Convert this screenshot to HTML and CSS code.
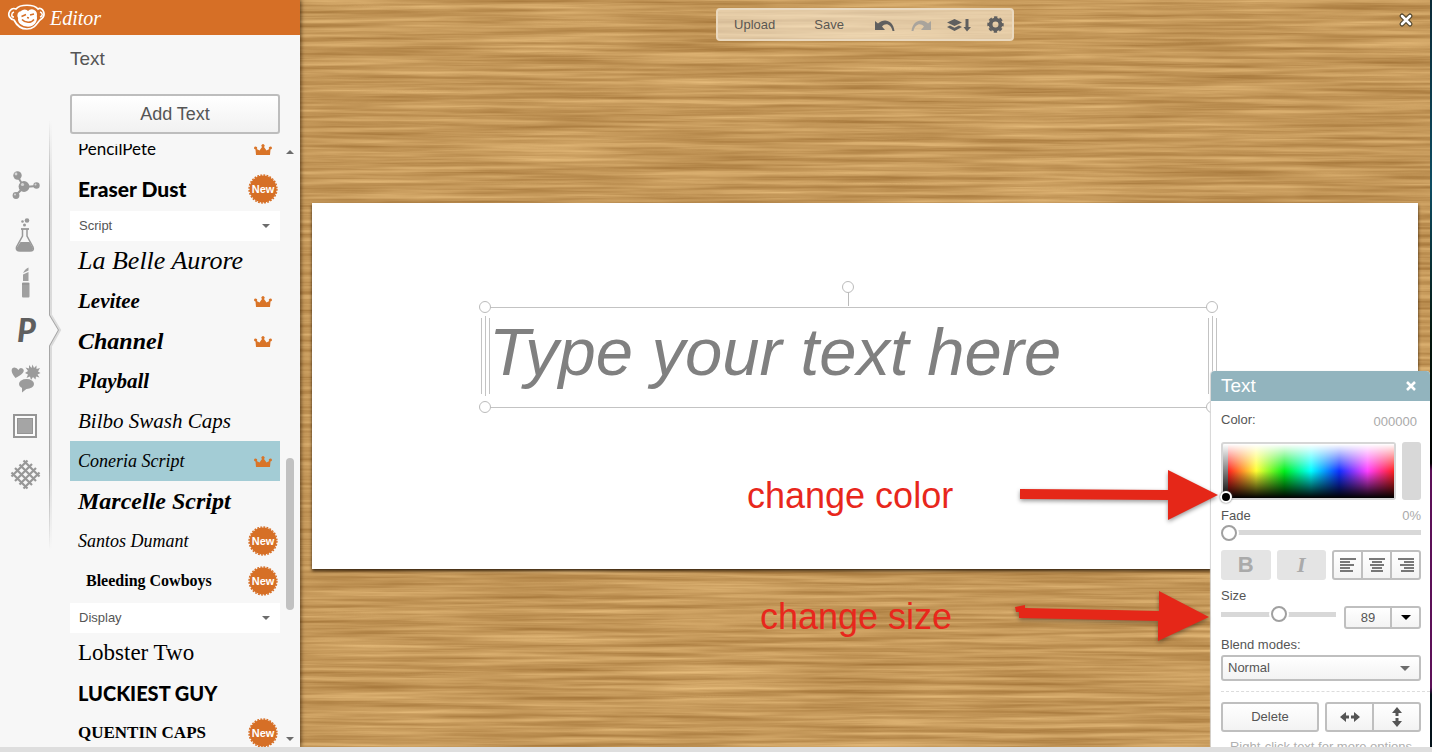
FILE: index.html
```html
<!DOCTYPE html>
<html lang="en">
<head>
<meta charset="utf-8">
<title>Editor</title>
<link rel="stylesheet" href="styles.css">
</head>
<body>
<svg class="defs" width="0" height="0" aria-hidden="true">
  <defs>
    <symbol id="crown" viewBox="0 0 18 11"><path d="M2 11 1.500 5.500A1.500 1.500 0 1 1 2.700 5L5.500 6.500 8 3A1.600 1.600 0 1 1 10 3L12.500 6.500 15.300 5A1.500 1.500 0 1 1 16.500 5.500L16 11Z" fill="#d97428"/></symbol>
    <symbol id="seal" viewBox="0 0 30 30"><circle cx="15" cy="15" r="13.500" fill="#d66f26"/><circle cx="15" cy="15" r="13.900" fill="none" stroke="#d66f26" stroke-width="1.500" stroke-dasharray="1.800 1.320"/></symbol>
    <filter id="grain" x="0" y="0" width="100%" height="100%" color-interpolation-filters="sRGB">
      <feTurbulence type="fractalNoise" baseFrequency="0.006 0.21" numOctaves="4" seed="11"/>
      <feColorMatrix values="0.3 0 0 0 0.62  0.32 0 0 0 0.435  0.3 0 0 0 0.2  0 0 0 0 1"/>
    </filter>
  </defs>
</svg>
<div class="app">
  <aside class="sidebar">
    <header class="brand">
      <svg width="40" height="30" viewBox="0 0 40 30" fill="none" stroke="#fff" stroke-width="1.700" aria-hidden="true">
        <path d="M11 6C15 1 29 1 33 6C37 3 43 12 35 17C32 20 30 26 22 26C15 26 11 21 9 17C0 15 4 3 11 6Z"/>
        <path d="M16 9C20 6 22 8 23 9C27 5 32 8 31 13C32 19 28 23 23 23C17 23 13 19 14 15C12 12 14 9 16 9Z" fill="#fff"/>
        <path d="M9 9C6 10 6 14 9 14M35 9C38 10 38 13 35 14" stroke-width="1.500"/>
        <path d="M16.500 13.500L21 11.500M25 12L29 11M17 16.500C20 20 26 20.500 29 16.500M22 14.500L24 15" stroke="#d66f26" stroke-width="1.500"/>
      </svg>
      <span class="brand-name">Editor</span>
    </header>
    <div class="side-body">
      <nav class="rail" aria-label="Tools">
        <svg class="rail-edge" width="14" height="430" viewBox="0 0 14 430" fill="none" aria-hidden="true">
          <defs><linearGradient id="edge" x1="0" y1="0" x2="0" y2="430" gradientUnits="userSpaceOnUse"><stop offset="0" stop-color="#999" stop-opacity="0"/><stop offset=".2" stop-color="#999"/><stop offset=".8" stop-color="#999"/><stop offset="1" stop-color="#999" stop-opacity="0"/></linearGradient></defs>
          <path d="M2.500 0V195L11.500 210 2.500 226V430" stroke="url(#edge)" stroke-width="3" opacity=".3"/>
          <path d="M1.500 0V195L10.500 210 1.500 226V430" stroke="url(#edge)" opacity=".8"/>
        </svg>
        <button class="tool" aria-label="Basic edits"><svg width="50" height="48" viewBox="0 0 50 48" fill="#989898"><path d="M17 13.500L24 25 16 33M24 25L37 24" stroke="#989898" stroke-width="2" fill="none"/><circle cx="17.500" cy="13.500" r="4.200"/><circle cx="24" cy="24.500" r="5.400"/><circle cx="36.500" cy="23.500" r="3.200"/><circle cx="16" cy="33.500" r="3.400"/><g fill="#d6d6d6"><circle cx="16" cy="12" r="1.400"/><circle cx="22.500" cy="22.500" r="1.600"/><circle cx="15" cy="32.500" r="1"/><circle cx="35.500" cy="22.500" r="1"/></g></svg></button>
        <button class="tool" aria-label="Effects"><svg width="50" height="48" viewBox="0 0 50 48" fill="#999"><circle cx="27" cy="10.500" r="2.300"/><circle cx="22.500" cy="11.500" r="1.300"/><circle cx="24.500" cy="15" r="1.500"/><path d="M21 19H29" stroke="#999" stroke-width="1.800"/><path d="M22.500 19V26L16.500 37Q15.500 41 20 41H30Q34.500 41 33 37L27 26V19" fill="none" stroke="#999" stroke-width="1.500"/><path d="M20.500 32H29.500L33 38Q33 41 30 41H20Q16 41 16.500 38Z"/></svg></button>
        <button class="tool" aria-label="Touch up"><svg width="50" height="48" viewBox="0 0 50 48" fill="#a0a0a0"><rect x="22" y="24.500" width="7.500" height="15" rx="1"/><path d="M23 16.500L28.500 14V23H23ZM23 15C25 11.500 26.500 10.500 28.500 9.500V12.500Z"/><path d="M22 26H29" stroke="#8d8d8d"/></svg></button>
        <button class="tool tool-text" aria-label="Text">P</button>
        <button class="tool" aria-label="Overlays"><svg width="50" height="48" viewBox="0 0 50 48" fill="#9b9b9b"><path d="M15.500 24C10 18 11 13.500 14.500 13.500Q17 13.500 18.500 16Q20 13 22.500 14.500C26 17 22 21 15.500 24Z"/><path d="M32.500 10.500L34 14 36.500 11.500 36.500 15 40 14 38 17.500 40.500 19 37.500 20.500 39.500 23.500 36 22.500 35.500 25.500 33 23 31 26 30 22.500 26.500 24 28 20.500 25 19 28 17 25.500 13.500 29 14.500 29 11 31.500 14Z"/><ellipse cx="26.500" cy="30" rx="7.500" ry="5"/><path d="M22 33V38.500L27 34.500Z"/></svg></button>
        <button class="tool" aria-label="Frames"><svg width="50" height="48" viewBox="0 0 50 48"><rect x="14" y="13" width="22" height="22" fill="#fcfcfc" stroke="#969696" stroke-width="2"/><rect x="17.500" y="16.500" width="15" height="15" fill="#a5a5a5" stroke="#949494"/></svg></button>
        <button class="tool" aria-label="Textures"><svg width="50" height="48" viewBox="0 0 50 48" stroke="#979797" stroke-width="2.200" fill="none"><path d="M11.500 22.500L27.500 38.500M15 18L32 35M19.500 14.500L36 31M23.500 10.500L39.500 26.500M11.500 26.500L27.500 10.500M15 31L32 14M19.500 34.500L36 18M23.500 38.500L39.500 22.500"/></svg></button>
      </nav>
      <section class="panel">
        <h1 class="panel-title">Text</h1>
        <button class="add-text">Add Text</button>
        <div class="browser">
          <div class="fonts">
            <button class="font clipped"><span class="hand">PencilPete</span><svg class="crown"><use href="#crown"/></svg></button>
            <button class="font"><span class="chalk">Eraser Dust</span><span class="new"><svg class="seal"><use href="#seal"/></svg><b>New</b></span></button>
            <button class="group">Script<i class="caret"></i></button>
            <button class="font"><span class="script s-xxl">La Belle Aurore</span></button>
            <button class="font"><span class="script s-l heavy">Levitee</span><svg class="crown"><use href="#crown"/></svg></button>
            <button class="font"><span class="script s-xl heavy">Channel</span><svg class="crown"><use href="#crown"/></svg></button>
            <button class="font"><span class="script s-l heavy">Playball</span></button>
            <button class="font"><span class="script s-l">Bilbo Swash Caps</span></button>
            <button class="font selected"><span class="script s-m">Coneria Script</span><svg class="crown"><use href="#crown"/></svg></button>
            <button class="font"><span class="script s-xl heavy">Marcelle Script</span></button>
            <button class="font"><span class="script s-m">Santos Dumant</span><span class="new"><svg class="seal"><use href="#seal"/></svg><b>New</b></span></button>
            <button class="font"><span class="western">Bleeding Cowboys</span><span class="new"><svg class="seal"><use href="#seal"/></svg><b>New</b></span></button>
            <button class="group">Display<i class="caret"></i></button>
            <button class="font"><span class="lobster">Lobster Two</span></button>
            <button class="font"><span class="luckiest">LUCKIEST GUY</span></button>
            <button class="font"><span class="quentin">QUENTIN CAPS</span><span class="new"><svg class="seal"><use href="#seal"/></svg><b>New</b></span></button>
          </div>
          <div class="scroll" aria-hidden="true"><i class="caret up"></i><span class="space-a"></span><span class="thumb"></span><span class="space-b"></span><i class="caret"></i></div>
        </div>
      </section>
    </div>
  </aside>

  <main class="workspace">
    <svg class="wood" width="100%" height="100%" aria-hidden="true"><rect width="100%" height="100%" filter="url(#grain)"/></svg>
    <div class="toolbar">
      <button class="word">Upload</button>
      <button class="word">Save</button>
      <div class="icons">
        <button aria-label="Undo"><svg width="20" height="14" viewBox="0 0 20 14"><path d="M0 3L3 5.500C9 0 18 2 19.500 13H17.500C16 6 10.500 4.500 7 8.500L10 12H0Z" fill="#5f5f5f"/></svg></button>
        <button aria-label="Redo"><svg width="20" height="14" viewBox="0 0 20 14"><path d="M20 3L17 5.500C11 0 2 2 .5 13H2.500C4 6 9.500 4.500 13 8.500L10 12H20Z" fill="#a9a49c"/></svg></button>
        <button aria-label="Flatten layers"><svg width="24" height="14" viewBox="0 0 24 14" fill="#5f5f5f"><path d="M7.500 1L15 4.500 7.500 8 0 4.500ZM0 9L3 7.500 7.500 9.800 12 7.500 15 9 7.500 13Z"/><path d="M18.500 1H21.500V9H24L20 13.500 16.500 9H18.500Z"/></svg></button>
        <button aria-label="Settings"><svg width="17" height="17" viewBox="0 0 17 17" fill="none" stroke="#5f5f5f"><circle cx="8.500" cy="8.500" r="4.900" stroke-width="3.800"/><circle cx="8.500" cy="8.500" r="7.200" stroke-width="2" stroke-dasharray="3.400 2.250" stroke-dashoffset="1.700"/></svg></button>
      </div>
    </div>
    <button class="close" aria-label="Close"><svg width="16" height="16" viewBox="0 0 16 16" stroke-linecap="round"><path d="M4 4L12 12M12 4L4 12" stroke="#54482f" stroke-width="5"/><path d="M4 4L12 12M12 4L4 12" stroke="#fff" stroke-width="2.500"/></svg></button>

    <div class="paper">
      <div class="textbox">
        <input class="canvas-text" aria-label="Canvas text" value="Type your text here">
        <svg class="side left" width="9" height="80" viewBox="0 0 9 80"><path d="M.5 2V78M4.500 0V80M8.500 2V78" stroke="#c3c3c3"/></svg>
        <svg class="side right" width="9" height="80" viewBox="0 0 9 80"><path d="M.5 2V78M4.500 0V80M8.500 2V78" stroke="#c3c3c3"/></svg>
        <i class="stem"></i>
        <i class="knob k1"></i><i class="knob k2"></i><i class="knob k3"></i><i class="knob k4"></i><i class="knob k5"></i>
      </div>
    </div>

    <p class="note note-color">change color</p>
    <p class="note note-size">change size</p>

    <section class="props">
      <header class="props-head"><h2>Text</h2><button aria-label="Close panel"><svg width="12" height="12" viewBox="0 0 12 12"><path d="M2 2L10 10M10 2L2 10" stroke="#fff" stroke-width="2.500"/></svg></button></header>
      <div class="props-body">
        <div class="line color-line"><label for="hex">Color:</label><input id="hex" value="000000"></div>
        <div class="picker-row"><div class="picker"><span class="hues"></span><i class="cursor"></i></div><span class="swatch"></span></div>
        <div class="line"><label for="fade">Fade</label><output class="pale" for="fade">0%</output></div>
        <input type="range" id="fade" min="0" max="100" value="0">
        <div class="style-row">
          <button class="flat">B</button><button class="flat ital">I</button>
          <div class="joined">
            <button aria-label="Align left"><svg width="16" height="16" viewBox="0 0 16 16"><path d="M0 2H16M0 5H10M0 8H14M0 11H10M0 14H13" stroke="#4e4e4e" stroke-width="1.600"/></svg></button>
            <button aria-label="Align center"><svg width="16" height="16" viewBox="0 0 16 16"><path d="M0 2H16M3 5H13M1 8H15M3 11H13M2 14H14" stroke="#4e4e4e" stroke-width="1.600"/></svg></button>
            <button aria-label="Align right"><svg width="16" height="16" viewBox="0 0 16 16"><path d="M0 2H16M6 5H16M2 8H16M6 11H16M3 14H16" stroke="#4e4e4e" stroke-width="1.600"/></svg></button>
          </div>
        </div>
        <div class="line"><label for="size">Size</label></div>
        <div class="size-row">
          <input type="range" id="size" min="0" max="178" value="89">
          <div class="joined spin"><input aria-label="Size value" value="89"><button aria-label="Size list"><i class="caret dark"></i></button></div>
        </div>
        <div class="line blend"><label for="blend">Blend modes:</label></div>
        <div class="select"><select id="blend"><option>Normal</option></select><i class="caret wide"></i></div>
        <hr>
        <div class="action-row">
          <button class="delete">Delete</button>
          <div class="joined flips">
            <button aria-label="Flip horizontally"><svg width="20" height="12" viewBox="0 0 20 12" fill="#555"><path d="M0 6L6 1V4.500H9V7.500H6V11ZM20 6L14 1V4.500H11V7.500H14V11Z"/></svg></button>
            <button aria-label="Flip vertically"><svg width="12" height="20" viewBox="0 0 12 20" fill="#555"><path d="M6 0L1 6H4.500V9H7.500V6H11ZM6 20L1 14H4.500V11H7.500V14H11Z"/></svg></button>
          </div>
        </div>
        <p class="hint">Right-click text for more options</p>
      </div>
    </section>

    <svg class="arrow arrow-color" width="200" height="54" viewBox="0 0 200 54" aria-hidden="true"><path d="M0 20L148 21V1L198 26 148 51V31L0 30Z" fill="#e52718"/></svg>
    <svg class="arrow arrow-size" width="200" height="54" viewBox="0 0 200 54" aria-hidden="true"><path d="M0 17L10 15V18L144 21V1L194 27 143 51V31L4 28V22L1 22Z" fill="#e52718"/></svg>
  </main>
  <div class="desktop-edge"></div>
</div>
<footer class="status"></footer>
</body>
</html>
```

FILE: styles.css
```css
* { box-sizing: border-box; }
body { margin: 0; height: 100vh; display: flex; flex-direction: column; overflow: hidden; font: 13px/18px "Liberation Sans", Arial, sans-serif; color: #555; }
button { font: inherit; color: inherit; border: 0; padding: 0; background: none; }
input, select { font: inherit; color: inherit; }
h1, h2, p { margin: 0; font-weight: normal; }
svg { display: block; flex: none; }
.defs { position: absolute; }
.app { flex: 1; min-height: 0; display: flex; }
.status { height: 5px; background: #dedede; position: relative; z-index: 5; }
.desktop-edge { width: 2px; background: linear-gradient(#0b2b38, #0e4d63 25%, #04170f 45%, #000 62%, #5c1058 63%, #5c1058 92%, #04121a 93%); }

.sidebar { width: 300px; flex: none; display: flex; flex-direction: column; background: #f7f7f7; position: relative; z-index: 2; box-shadow: 1px 0 4px rgba(40, 20, 0, .7); }
.brand { height: 35px; flex: none; background: #d66f26; display: flex; align-items: center; padding-left: 5px; gap: 5px; }
.brand-name { color: #fff; font: italic 20px/32px "Liberation Serif", serif; }
.side-body { flex: 1; min-height: 0; display: flex; }
.rail { width: 50px; padding-top: 127px; position: relative; display: flex; flex-direction: column; }
.rail-edge { position: absolute; left: 48px; top: 85px; }
.tool { height: 48px; width: 50px; }
.tool-text { font: italic 900 32px/48px Lato, sans-serif; color: #5f5f5f; padding-left: 3px; }
.panel { flex: 1; padding: 12px 5px 0 20px; display: flex; flex-direction: column; min-width: 0; }
.panel-title { font-size: 19px; line-height: 24px; }
.add-text { margin-top: 23px; width: 210px; height: 40px; flex: none; border: 2px solid #bdbdbd; border-radius: 3px; background: linear-gradient(#fff, #f1f1f1); font-size: 18px; }
.browser { margin-top: 10px; flex: 1; min-height: 0; display: flex; justify-content: space-between; }
.fonts { width: 210px; overflow: hidden; }
.font { width: 100%; height: 40px; display: flex; align-items: center; justify-content: space-between; padding: 0 8px; color: #000; text-align: left; white-space: nowrap; }
.font.clipped { margin-top: -15px; }
.font.selected { background: #a3ccd5; }
.group { width: 100%; height: 30px; margin-top: 2px; background: #fff; display: flex; align-items: center; justify-content: space-between; padding: 0 10px 0 9px; }
.caret { border: 4px solid transparent; border-top-color: #6c6c6c; border-bottom: 0; width: 0; height: 0; flex: none; }
.caret.up { border-top: 0; border-bottom: 4px solid #6c6c6c; }
.caret.wide, .caret.dark { border-width: 5px 5px 0; }
.caret.dark { border-top-color: #000; }
.crown { width: 18px; height: 11px; }
.new { width: 30px; height: 30px; margin-right: -6px; display: grid; place-items: center; color: #fff; font-size: 11px; }
.new > * { grid-area: 1 / 1; }
.seal { width: 30px; height: 30px; }
.hand { font: 17px/24px Lato, sans-serif; }
.chalk { font: 900 21px/24px Lato, sans-serif; }
.script { font-family: "Liberation Serif", serif; font-style: italic; line-height: 32px; }
.heavy { font-weight: bold; }
.s-xxl { font-size: 26px; }
.s-xl { font-size: 24px; }
.s-l { font-size: 21px; }
.s-m { font-size: 18px; }
.western { font: bold 16px/24px "Liberation Serif", serif; padding-left: 8px; }
.lobster { font: 23px/30px "Liberation Serif", serif; }
.luckiest { font: 900 20px/24px Lato, sans-serif; }
.quentin { font: bold 17px/24px "Liberation Serif", serif; }
.scroll { width: 10px; padding: 6px 0; display: flex; flex-direction: column; align-items: center; }
.space-a { flex: 303; }
.thumb { flex: 151; width: 8px; border-radius: 4px; background: #c1c1c1; }
.space-b { flex: 127; }

.workspace { flex: 1; min-width: 0; position: relative; overflow: hidden; background: #c4965a; padding: 8px 12px 0; display: flex; flex-direction: column; }
.wood { position: absolute; left: 0; top: 0; }
.toolbar { position: relative; align-self: center; height: 33px; padding: 0 8px 0 16px; display: flex; align-items: center; gap: 39px; border: 2px solid #ead9bf; border-radius: 4px; background: rgba(255, 245, 230, .55); color: #5a5752; }
.icons { display: flex; align-items: center; gap: 16px; margin-left: -8px; }
.close { position: absolute; right: 16px; top: 12px; }
.paper { position: relative; margin-top: 162px; aspect-ratio: 1106 / 366; background: #fff; box-shadow: 0 2px 3px rgba(30, 15, 0, .85); }
.textbox { position: absolute; left: 173px; top: 104px; width: 727px; height: 101px; border: 1px solid #c3c3c3; border-width: 1px 0; }
.canvas-text { width: 100%; height: 86px; border: 0; padding: 0 0 0 4px; background: none; font-style: italic; font-size: 67px; color: #808080; outline: 0; }
.side { position: absolute; top: 8px; background: #fff; }
.side.left { left: -4px; }
.side.right { right: -5px; }
.stem { position: absolute; left: 363px; top: -16px; width: 1px; height: 14px; background: #bbb; }
.knob { position: absolute; width: 12px; height: 12px; border-radius: 6px; background: #fff; border: 1px solid #bbb; }
.k1 { left: -6px; top: -7px; }
.k2 { right: -6px; top: -7px; }
.k3 { left: -6px; bottom: -6px; }
.k4 { right: -6px; bottom: -6px; }
.k5 { left: 357px; top: -27px; }
.note { position: absolute; font-size: 36px; line-height: 40px; color: #e8271c; }
.note-color { left: 447px; top: 476px; }
.note-size { left: 460px; top: 597px; }
.arrow { position: absolute; filter: drop-shadow(0 2px 2px rgba(0, 0, 0, .4)); }
.arrow-color { left: 720px; top: 469px; }
.arrow-size { left: 715px; top: 590px; }

.props { position: absolute; right: 0; top: 371px; width: 219px; height: 376px; background: #fff; border-radius: 4px 4px 0 0; box-shadow: -1px 0 1px #d5d5d5; overflow: hidden; }
.props-head { height: 30px; padding: 0 13px 0 10px; background: #92b4be; color: #fff; display: flex; align-items: center; justify-content: space-between; }
.props-head h2 { font-size: 19px; line-height: 30px; }
.props-body { padding: 0 9px 0 10px; }
.line { height: 20px; margin-top: 6px; margin-bottom: -2px; display: flex; align-items: center; justify-content: space-between; }
.color-line { height: 38px; margin: 0 0 -2px; }
.color-line input { width: 60px; border: 0; padding: 4px 4px 0 0; text-align: right; color: #aaa; }
.pale { color: #aaa; }
.picker-row { margin-top: 7px; height: 58px; display: flex; gap: 6px; }
.color-line + .picker-row { margin-top: 5px; }
.picker { position: relative; flex: 1; border: 2px solid #d6d6d6; border-radius: 3px; padding-left: 5px; background: linear-gradient(#fff, #000); }
.hues { display: block; height: 100%; background: linear-gradient(#fff, rgba(255, 255, 255, 0) 50%, rgba(0, 0, 0, 0) 50%, #000), linear-gradient(90deg, #ff2020, #ff3 17%, #00f01c 34%, #0ff 50%, #1030ff 67%, #ff40ff 84%, #ff2020); }
.cursor { position: absolute; left: -3px; bottom: -5px; width: 12px; height: 12px; border-radius: 6px; background: #000; border: 2px solid #fff; box-shadow: 0 0 2px #555; }
.swatch { width: 19px; border-radius: 3px; background: #d8d8d8; }
input[type=range] { appearance: none; -webkit-appearance: none; display: block; width: 100%; height: 17px; margin: 0; background: linear-gradient(#d8d8d8, #d8d8d8) center / 100% 5px no-repeat; }
input[type=range]::-webkit-slider-thumb { -webkit-appearance: none; width: 16px; height: 16px; border-radius: 8px; background: #fff; border: 2px solid #a0a0a0; box-shadow: 0 0 0 2px #fff; }
.style-row { margin-top: 9px; height: 30px; display: flex; gap: 6px; }
.flat { flex: 1; border-radius: 3px; background: #e4e4e4; color: #aaa; font-size: 22px; font-weight: bold; }
.ital { font-family: "Liberation Serif", serif; font-style: italic; }
.joined { display: flex; border: 2px solid #bfbfbf; border-radius: 3px; background: linear-gradient(#fff, #f3f3f3); }
.joined > * { flex: 1; display: grid; place-items: center; }
.joined > * + * { border-left: 2px solid #bfbfbf; }
.style-row .joined { width: 89px; }
.size-row { margin-top: 2px; display: flex; gap: 8px; align-items: flex-start; }
.size-row input[type=range] { flex: 1; min-width: 0; height: 16px; }
.size-row .spin { width: 77px; height: 23px; }
.spin input { width: 44px; flex: none; border: 0; padding: 0; background: none; text-align: center; }
.blend { margin-top: 6px; }
.select { margin-top: 2px; height: 26px; display: flex; align-items: center; border: 2px solid #bfbfbf; border-radius: 3px; background: linear-gradient(#fff, #f3f3f3); padding-right: 9px; }
.select select { flex: 1; appearance: none; border: 0; background: none; padding: 0 5px; }
hr { margin: 10px -9px 10px 0; border: 0; border-top: 1px dashed #dcdcdc; }
.action-row { display: flex; gap: 6px; height: 30px; }
.delete { flex: 1; border: 2px solid #bfbfbf; border-radius: 3px; background: linear-gradient(#fff, #f3f3f3); }
.flips { width: 96px; }
.hint { margin-top: 6px; text-align: center; color: #b0b0b0; white-space: nowrap; }
```
